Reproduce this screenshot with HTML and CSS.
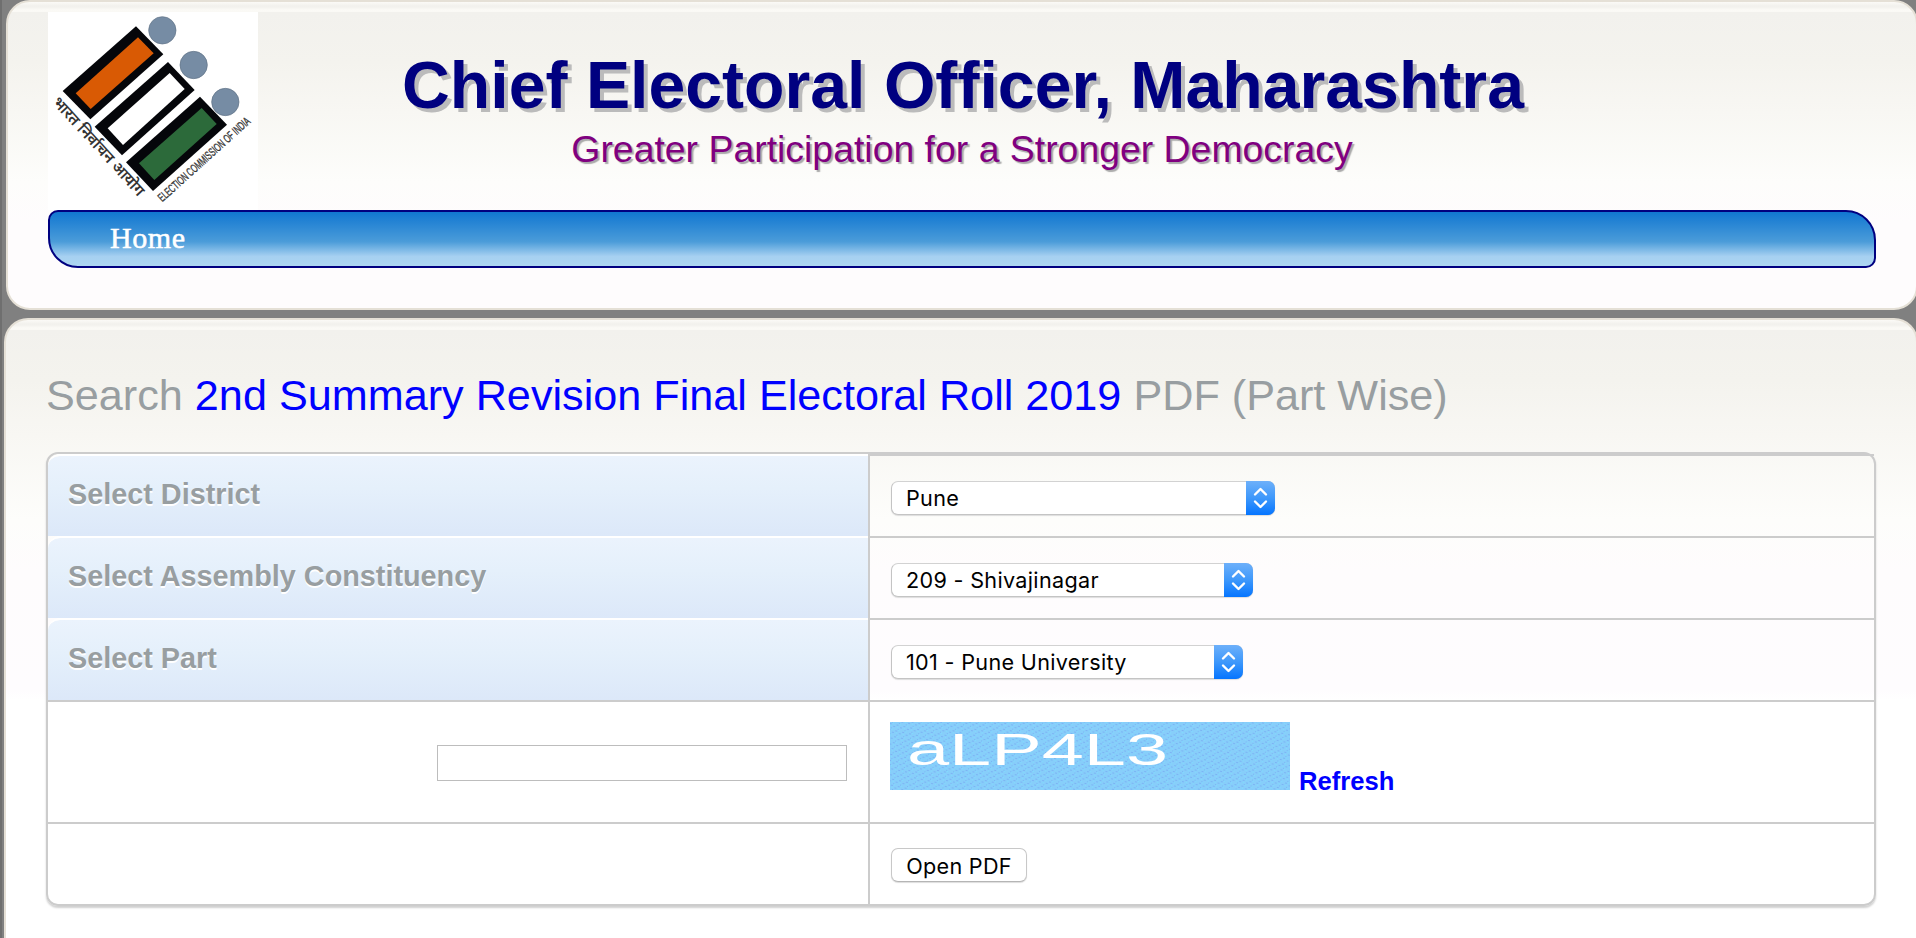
FILE: index.html
```
<!DOCTYPE html>
<html lang="en">
<head>
<meta charset="utf-8">
<title>Chief Electoral Officer, Maharashtra</title>
<link rel="stylesheet" href="styles.css">
</head>
<body>
<header class="panel panel-header">
  <div class="brand">
    <svg class="logo" viewBox="144 36 630 594" width="210" height="198">
      <rect x="144" y="36" width="630" height="594" fill="#fff"/>
      <g fill="#768ca4" stroke="#5f7185" stroke-width="2">
        <circle cx="487" cy="91" r="41"/><circle cx="581" cy="195" r="41"/><circle cx="676" cy="306" r="41"/>
      </g>
      <path fill="#05060a" d="M408 79L490 163L271 358L188 273Z"/>
      <path fill="#d95a04" d="M414 112L461 160L272 327L227 280Z"/>
      <path fill="#05060a" d="M504 186L584 270L366 466L284 380Z"/>
      <path fill="#fff" d="M509 219L554 267L369 435L323 385Z"/>
      <path fill="#05060a" d="M600 290L681 374L459 573L378 487Z"/>
      <path fill="#2c6a3a" d="M605 324L650 372L463 540L417 490Z"/>
      <text class="logo-hindi" transform="translate(155 308) rotate(47.5)" textLength="384" lengthAdjust="spacingAndGlyphs">भारत निर्वाचन आयोग</text>
      <text class="logo-english" transform="translate(487 607) rotate(-42)" textLength="358" lengthAdjust="spacingAndGlyphs">ELECTION COMMISSION OF INDIA</text>
    </svg>
    <div class="titles">
      <h1>Chief Electoral Officer, Maharashtra</h1>
      <p>Greater Participation for a Stronger Democracy</p>
    </div>
  </div>
  <nav class="menu"><a>Home</a></nav>
</header>
<main class="panel panel-main">
  <h2>Search <span>2nd Summary Revision Final Electoral Roll 2019</span> PDF (Part Wise)</h2>
  <div class="form-table">
    <div class="row">
      <div class="label">Select District</div>
      <div class="field"><div class="select select-district"><span>Pune</span><i><svg viewBox="0 0 29 34"><path d="M9 13.5L14.5 8L20 13.5M9 20.5L14.5 26L20 20.5"/></svg></i></div></div>
    </div>
    <div class="row">
      <div class="label">Select Assembly Constituency</div>
      <div class="field"><div class="select select-assembly"><span>209 - Shivajinagar</span><i><svg viewBox="0 0 29 34"><path d="M9 13.5L14.5 8L20 13.5M9 20.5L14.5 26L20 20.5"/></svg></i></div></div>
    </div>
    <div class="row">
      <div class="label">Select Part</div>
      <div class="field"><div class="select select-part"><span>101 - Pune University</span><i><svg viewBox="0 0 29 34"><path d="M9 13.5L14.5 8L20 13.5M9 20.5L14.5 26L20 20.5"/></svg></i></div></div>
    </div>
    <div class="row row-captcha">
      <div class="plain"><input type="text" class="code"></div>
      <div class="field captcha-field">
        <svg class="captcha" width="400" height="68" viewBox="0 0 400 68">
          <defs>
            <pattern id="grain" width="7" height="6" patternUnits="userSpaceOnUse" patternTransform="rotate(12)">
              <rect width="7" height="6" fill="#87cefa"/>
              <path d="M0 1h2v1h-2zM4 3h2v1h-2zM2 5h1v1h-1z" fill="#7cb3f4"/>
              <path d="M3 0h1v1h-1zM1 3h1v1h-1z" fill="#7fdcff"/>
            </pattern>
          </defs>
          <rect width="400" height="68" fill="url(#grain)"/>
          <text x="17" y="43" textLength="261" lengthAdjust="spacingAndGlyphs">aLP4L3</text>
        </svg>
        <a class="refresh">Refresh</a>
      </div>
    </div>
    <div class="row">
      <div class="plain"></div>
      <div class="field"><button class="open">Open PDF</button></div>
    </div>
  </div>
</main>
</body>
</html>
```
FILE: styles.css
```
* { box-sizing: border-box; }

html {
  background: #808080;
  overflow: hidden;
}

body {
  margin: 0;
  width: 1918px;
  height: 938px;
  border-left: 2px solid #6f6f6f;
  background: #808080;
  font-family: "Liberation Sans", Arial, sans-serif;
}

.panel {
  border: 2px solid #e5e0d6;
  border-radius: 24px;
  background:
    linear-gradient(#fbfaf7 0, #f2f1ed 4px, #f3f2ee 5px, #fbfaf6 8px, #faf9f5 10px, transparent 10px),
    linear-gradient(#f2f1ed 10px, #f4f3ee 60px, #f8f7f3 110px, #fdfdfb 180px, #fefcfd 220px);
}

.panel-header {
  height: 310px;
  margin-left: 4px;
  padding: 10px 40px 0 40px;
}

.brand {
  display: flex;
  height: 198px;
}

.logo { display: block; flex: none; }

.logo-hindi {
  font: 600 46px "Noto Sans", "Noto Sans Devanagari", sans-serif;
  fill: #333;
}

.logo-english {
  font: 36px "Liberation Sans", sans-serif;
  fill: #333;
  stroke: #333;
  stroke-width: 1px;
}

.titles { margin-left: 140px; white-space: nowrap; }

.titles h1 {
  width: 1130px;
  margin: 35px 0 0;
  font-size: 66.2px;
  line-height: 77px;
  color: #000080;
  text-shadow: 4px 4px 0 #bbb;
  text-align: center;
}

.titles p {
  width: 1128px;
  margin: 3px 0 0;
  font-size: 37.4px;
  line-height: 44px;
  color: #800080;
  text-shadow: 2px 2px 1px #aaa;
  text-align: center;
}

.menu {
  width: 1828px;
  height: 58px;
  padding-left: 60px;
  border: 2px solid #000080;
  border-radius: 10px 30px 10px 30px;
  background: linear-gradient(#1177d1, #4b9cd9 55%, #a6d0f1 82%, #add6f1);
}

.menu a {
  color: #fff;
  font: 30px/52px "Liberation Serif", serif;
  letter-spacing: .6px;
  -webkit-text-stroke: .5px #fff;
}

.panel-main {
  height: 620px;
  margin: 8px 0 0 2px;
  padding: 50px 40px 0 40px;
  border-bottom: 0;
  border-radius: 24px 24px 0 0;
  background:
    linear-gradient(#fbfaf7 0, #f2f1ed 4px, #f3f2ee 5px, #fbfaf6 8px, #faf9f5 10px, transparent 10px),
    linear-gradient(#f2f1ed 10px, #f4f3ee 60px, #f8f7f3 115px, #fdfdfb 200px, #fefcfd 250px, #fefcfe 370px, #fff 380px);
}

h2 {
  margin: 0 0 32px;
  height: 50px;
  font-size: 43.2px;
  line-height: 51px;
  font-weight: normal;
  color: #989ea1;
  white-space: nowrap;
}

h2 span { color: #00f; }

.form-table {
  width: 1830px;
  border: 2px solid #ccc;
  border-radius: 12px;
  box-shadow: 0 2px 2px #d0d0d0;
}

.row {
  display: grid;
  grid-template-columns: 820px 1fr;
  height: 82px;
}

.row-captcha { height: 122px; }

.label {
  padding: 21px 20px 0;
  border-top: 2px solid #fff;
  border-radius: 12px 0 0 0;
  background: linear-gradient(#ebf3fd, #e5f0fb 40%, #dce8f9) padding-box;
  color: #989ea1;
  font-size: 28.8px;
  line-height: 34px;
  font-weight: bold;
  text-shadow: 0 2px 0 #fff;
}

.plain {
  display: flex;
  justify-content: flex-end;
  border-top: 2px solid #ccc;
  padding: 43px 21px 0 0;
}

.field {
  border-top: 2px solid #ccc;
  border-left: 2px solid #ccc;
  padding: 25px 0 0 21px;
}

.row:last-child .field { padding-top: 24px; }

.select {
  display: flex;
  justify-content: space-between;
  height: 34px;
  padding-left: 14px;
  border: 1px solid #c4c4c4;
  border-top-color: #d2d2d2;
  border-radius: 7px;
  background: #fff;
  box-shadow: 0 1px 1px #ddd;
  color: #000;
  font: 21.6px/33px Inter, sans-serif;
  letter-spacing: .32px;
}

.select-district { width: 384px; }
.select-assembly { width: 362px; }
.select-part { width: 352px; }

.select i {
  width: 29px;
  margin: -1px;
  border-radius: 0 7px 7px 0;
  background: linear-gradient(#6db0fa, #3e98fb 50%, #0575ff);
}

.select svg {
  display: block;
  width: 29px;
  height: 34px;
  fill: none;
  stroke: #fff;
  stroke-width: 2.4;
  stroke-linecap: round;
  stroke-linejoin: round;
}

.code {
  width: 410px;
  height: 36px;
  border: 1px solid #bdbdbd;
  background: #fff;
}

.captcha-field {
  display: flex;
  align-items: flex-start;
  gap: 9px;
  padding: 20px 0 0 20px;
}

.captcha text {
  font: 45px "Liberation Sans", sans-serif;
  fill: #fff;
}

.refresh {
  margin-top: 44px;
  color: #00f;
  font-size: 25.6px;
  line-height: 30px;
  font-weight: bold;
}

.open {
  display: block;
  width: 136px;
  height: 34px;
  padding: 1px 0 0;
  border: 1px solid #c8c8c8;
  border-bottom-color: #b5b5b5;
  border-radius: 7px;
  background: #fff;
  box-shadow: 0 1px 1px #ddd;
  color: #000;
  font: 21.6px/32px Inter, sans-serif;
  letter-spacing: .3px;
}
```
